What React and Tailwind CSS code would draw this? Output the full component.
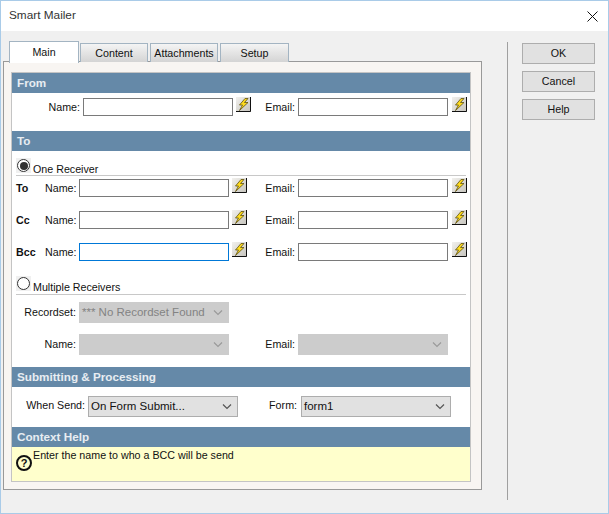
import React from 'react';

const FONT = "font-['Liberation_Sans','Noto_Sans',sans-serif]";

const Lightning = ({ className = '' }) => (
  <svg width="15" height="15" viewBox="0 0 15 15" className={`shrink-0 ${className}`}>
    <defs>
      <linearGradient id="boltBg" x1="0" y1="0" x2="1" y2="1">
        <stop offset="0" stopColor="#f2f1ee" />
        <stop offset="1" stopColor="#c4c2bb" />
      </linearGradient>
    </defs>
    <rect x="0" y="0" width="15" height="15" fill="url(#boltBg)" />
    <path d="M0 14.5H14.5V0" fill="none" stroke="#111" />
    <path d="M9 1.5L3.5 8H6.5L3.5 13.5L12 5.5H8.5L12 1.5Z" fill="#ffdc1e" stroke="#5e5010" strokeWidth="0.8" strokeLinejoin="round" />
  </svg>
);

const Chevron = ({ color = '#555' }) => (
  <svg width="10" height="6" viewBox="0 0 10 6" className="shrink-0">
    <path d="M1 0.5L5 4.5L9 0.5" fill="none" stroke={color} strokeWidth="1.2" />
  </svg>
);

const Field = ({ focus }) => (
  <input
    type="text"
    className={`w-[150px] h-[18px] bg-white border outline-none ${focus ? 'border-[#0078d7]' : 'border-[#7a7a7a]'}`}
  />
);

const Select = ({ value, disabled }) => (
  <div
    className={`w-[150px] h-[21px] flex items-center justify-between pl-[2px] pr-[5px] border text-[11.5px] ${
      disabled ? 'bg-[#cccccc] border-[#cccccc] text-[#838383]' : 'bg-[#e1e1e1] border-[#adadad] text-[#111]'
    }`}
  >
    <span className="whitespace-nowrap">{value}</span>
    <Chevron color={disabled ? '#9a9a9a' : '#555'} />
  </div>
);

const Header = ({ children }) => (
  <div className="h-[20px] shrink-0 bg-[#6589a8] pl-[5px] flex items-center text-white/85 text-[11.7px] font-bold">{children}</div>
);

const Radio = ({ checked, label }) => (
  <div className="flex items-end h-[16px] ml-[4px]">
    <div className="w-[15px] h-[15px] bg-[#f0f0f0] flex items-center justify-center">
      <div className="w-[13px] h-[13px] rounded-full border border-[#333] bg-white flex items-center justify-center">
        {checked && <div className="w-[8px] h-[8px] rounded-full bg-[#333]" />}
      </div>
    </div>
    <span className="ml-[2px] leading-[14px] -mb-[3px]">{label}</span>
  </div>
);

const ReceiverRow = ({ tag, focus, className = '' }) => (
  <div className={`flex items-start ${className}`}>
    <div className="w-[33px] pl-[4px] font-bold leading-[18px]">{tag}</div>
    <div className="w-[31px] leading-[18px]">Name:</div>
    <div className="ml-[3px]"><Field focus={focus} /></div>
    <Lightning className="ml-[3px] -mt-[1px]" />
    <div className="w-[48px] text-right leading-[18px]">Email:</div>
    <div className="ml-[3px]"><Field /></div>
    <Lightning className="ml-[4px] -mt-[1px]" />
  </div>
);

const Tab = ({ label, className }) => (
  <div
    className={`h-[19px] flex items-center justify-center border border-b-0 border-[#a3b4c2] bg-gradient-to-b from-[#f4f4f4] to-[#d4d4d4] ${className}`}
  >
    {label}
  </div>
);

const DialogButton = ({ label }) => (
  <button className="w-[73px] h-[21px] bg-[#e1e1e1] border border-[#adadad] text-[#111]">{label}</button>
);

export default function App() {
  return (
    <div className={`w-[609px] h-[514px] flex flex-col border border-[#a9cbe8] bg-[#f0f0f0] text-[10.7px] text-[#111] overflow-hidden ${FONT}`}>
      <div className="h-[30px] shrink-0 bg-white flex items-center justify-between pl-[8px] pr-[10px]">
        <span className="text-[#333] text-[11.8px]">Smart Mailer</span>
        <svg width="11" height="11" viewBox="0 0 11 11">
          <path d="M0.5 0.5L10.5 10.5M10.5 0.5L0.5 10.5" stroke="#111" strokeWidth="1" />
        </svg>
      </div>

      <div className="flex-1 flex">
        {/* left side: tabs and panel */}
        <div className="w-[479px] ml-[2px] pt-[10px] shrink-0">
          <div className="h-[20px] flex items-start pl-[6px]">
            <div className="relative z-10 w-[70px] h-[22px] flex items-center justify-center bg-white border border-b-0 border-[#a3b4c2]">
              Main
            </div>
            <Tab label="Content" className="w-[68px] mt-[2px] ml-[1px]" />
            <Tab label="Attachments" className="w-[68px] mt-[2px] ml-[2px]" />
            <Tab label="Setup" className="w-[69px] mt-[2px] ml-[2px]" />
          </div>

          <div className="h-[429px] border border-[#999] bg-[#f8f5f2] pl-[7px] pr-[10px] pt-[10px] pb-[7px]">
            <div className="h-full flex flex-col border border-[#c4c4c4] bg-white">
              <Header>From</Header>
              <div className="h-[38px] shrink-0 pt-[5px] flex items-start">
                <div className="w-[68px] text-right leading-[18px]">Name:</div>
                <div className="ml-[3px]"><Field /></div>
                <Lightning className="ml-[3px] -mt-[1px]" />
                <div className="w-[44px] text-right leading-[18px]">Email:</div>
                <div className="ml-[3px]"><Field /></div>
                <Lightning className="ml-[4px] -mt-[1px]" />
              </div>

              <Header>To</Header>
              <div className="pt-[6px]">
                <Radio checked label="One Receiver" />
                <div className="h-px mx-[4px] mt-[2px] bg-[#c8c8c8]" />
                <ReceiverRow tag="To" className="mt-[3px]" />
                <ReceiverRow tag="Cc" className="mt-[14px]" />
                <ReceiverRow tag="Bcc" focus className="mt-[14px]" />
                <div className="mt-[14px]">
                  <Radio label="Multiple Receivers" />
                </div>
                <div className="h-px mx-[4px] mt-[3px] bg-[#c8c8c8]" />
                <div className="flex items-center mt-[7px]">
                  <div className="w-[64px] text-right">Recordset:</div>
                  <div className="ml-[3px]"><Select value="*** No Recordset Found" disabled /></div>
                </div>
                <div className="flex items-center mt-[11px]">
                  <div className="w-[64px] text-right">Name:</div>
                  <div className="ml-[3px]"><Select value="" disabled /></div>
                  <div className="w-[66px] text-right">Email:</div>
                  <div className="ml-[3px]"><Select value="" disabled /></div>
                </div>
              </div>

              <div className="mt-[12px]"><Header>Submitting &amp; Processing</Header></div>
              <div className="h-[40px] shrink-0 pt-[9px] flex items-start">
                <div className="w-[73px] text-right leading-[19px]">When Send:</div>
                <div className="ml-[3px]"><Select value="On Form Submit..." /></div>
                <div className="w-[59px] text-right leading-[19px]">Form:</div>
                <div className="ml-[4px]"><Select value="form1" /></div>
              </div>

              <Header>Context Help</Header>
              <div className="flex-1 bg-[#ffffcc] flex items-start pl-[4px]">
                <div className="w-[16px] h-[16px] mt-[8px] rounded-full border-2 border-[#111] flex items-center justify-center text-[11px] font-bold leading-none">
                  ?
                </div>
                <span className="ml-px leading-[16px]">Enter the name to who a BCC will be send</span>
              </div>
            </div>
          </div>
        </div>

        {/* right side: divider and buttons */}
        <div className="w-px h-[458px] mt-[11px] ml-[25px] bg-[#a0a0a0] shrink-0" />
        <div className="ml-[14px] pt-[12px] flex flex-col gap-[7px]">
          <DialogButton label="OK" />
          <DialogButton label="Cancel" />
          <DialogButton label="Help" />
        </div>
      </div>
    </div>
  );
}
